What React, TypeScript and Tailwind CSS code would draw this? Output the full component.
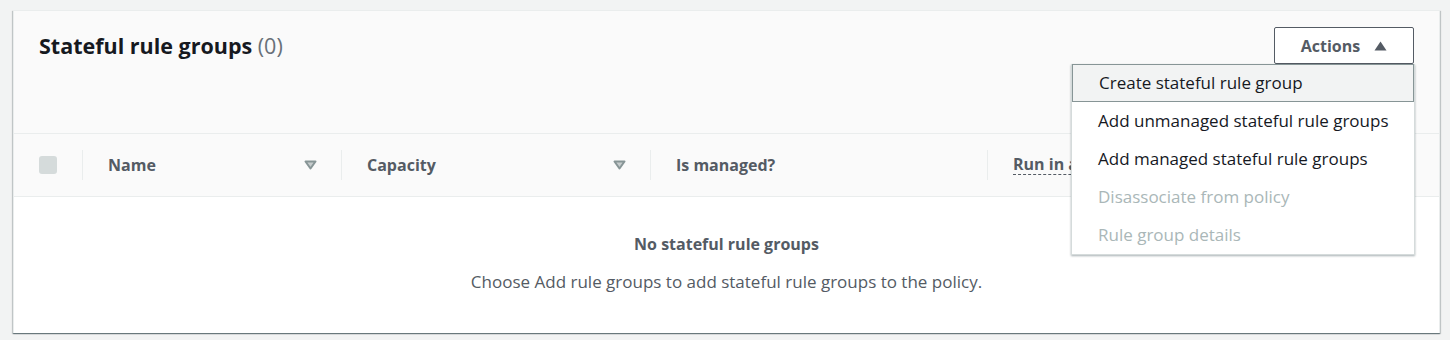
import React from "react";

const font = { fontFamily: '"Open Sans", "Noto Sans", sans-serif' };

function SortIcon() {
    return (
        <svg width="13" height="10" viewBox="0 0 13 10" className="shrink-0">
            <polygon points="1.5,1.5 11.5,1.5 6.5,8.5" fill="#c6cccd" stroke="#879596" strokeWidth="2" strokeLinejoin="round" />
        </svg>
    );
}

function HeaderCell({ label, width, sortable, dotted }: { label: string; width?: string; sortable?: boolean; dotted?: boolean }) {
    return (
        <div className={`flex items-center h-full ${width ?? "flex-1"}`}>
            <div className="w-px h-[30px] bg-[#eaeded]" />
            <div className="flex flex-1 items-center justify-between pl-[25px] pr-[24px]">
                <span className={`text-[16px] font-bold text-[#545b64] ${dotted ? "border-b border-dashed border-[#545b64] leading-[20px]" : ""}`}>{label}</span>
                {sortable && <SortIcon />}
            </div>
        </div>
    );
}

const menuItems = [
    { label: "Create stateful rule group", disabled: false, active: true },
    { label: "Add unmanaged stateful rule groups", disabled: false },
    { label: "Add managed stateful rule groups", disabled: false },
    { label: "Disassociate from policy", disabled: true },
    { label: "Rule group details", disabled: true },
];

export default function App() {
    return (
        <div className="w-[1450px] h-[340px] bg-[#f2f3f3] pt-[10px] pl-[13px] pr-[10px] overflow-hidden" style={font}>
            <div className="bg-white border-t border-l border-r border-[#eaeded] shadow-[0_1px_1px_0_rgba(0,28,36,0.4),1px_1px_1px_0_rgba(0,28,36,0.15),-1px_1px_1px_0_rgba(0,28,36,0.15)]">
                {/* header */}
                <div className="h-[122px] bg-[#fafafa] flex items-start justify-between pl-[25px] pr-[25px] pt-[16px]">
                    <h2 className="text-[21.5px] font-bold text-[#16191f] leading-[37px]">
                        Stateful rule groups <span className="font-normal text-[#687078]">(0)</span>
                    </h2>
                    <div className="relative">
                        <button className="h-[37px] w-[140px] flex items-center justify-center gap-[14px] bg-white border border-[#545b64] rounded-[2px] text-[16px] font-bold text-[#545b64]">
                            Actions
                            <svg width="13" height="10" viewBox="0 0 13 10">
                                <polygon points="0.5,9.5 12.5,9.5 6.5,0.5" fill="#545b64" />
                            </svg>
                        </button>
                        <div className="absolute top-[37px] right-[-1px] w-[344px] bg-white border border-[#d5dbdb] border-t-0 shadow-[0_1px_2px_0_rgba(0,28,36,0.35)] z-10">
                            {menuItems.map((item) => (
                                <div
                                    key={item.label}
                                    className={`h-[38px] flex items-center pl-[26px] text-[17px] ${item.active ? "bg-[#f2f3f3] border border-[#879596] pl-[25px]" : ""} ${item.disabled ? "text-[#aab7b8]" : "text-[#16191f]"}`}
                                >
                                    {item.label}
                                </div>
                            ))}
                        </div>
                    </div>
                </div>
                {/* table header */}
                <div className="h-[64px] bg-[#fafafa] border-t border-b border-[#eaeded] flex items-center pb-[1px]">
                    <div className="w-[68px] pl-[25px] flex items-center">
                        <div className="w-[18px] h-[18px] rounded-[3px] bg-[#d5dbdb]" />
                    </div>
                    <HeaderCell label="Name" width="w-[259px]" sortable />
                    <HeaderCell label="Capacity" width="w-[309px]" sortable />
                    <HeaderCell label="Is managed?" width="w-[337px]" />
                    <HeaderCell label="Run in action order" dotted />
                </div>
                {/* empty state */}
                <div className="h-[136px] flex flex-col items-center pt-[35px] text-[#545b64]">
                    <div className="text-[16px] font-bold leading-[24px]">No stateful rule groups</div>
                    <div className="text-[17px] leading-[24px] mt-[14px]">Choose Add rule groups to add stateful rule groups to the policy.</div>
                </div>
            </div>
        </div>
    );
}
